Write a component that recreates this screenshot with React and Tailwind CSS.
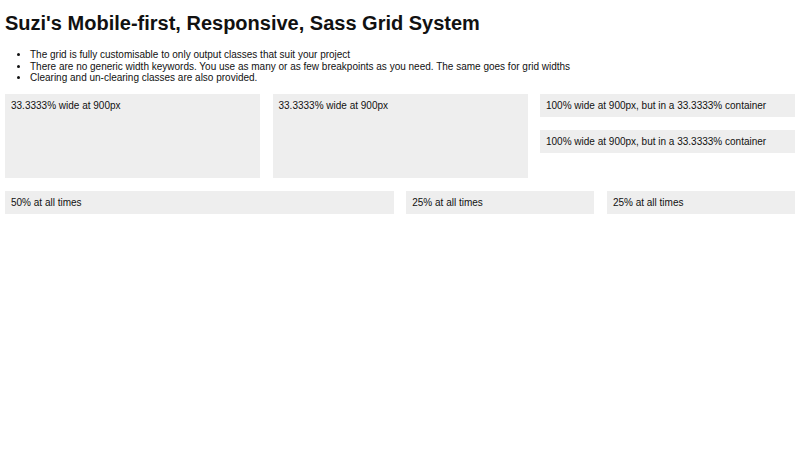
const Box = ({ children, className = "" }) => (
  <div className={`bg-[#eeeeee] px-[6px] py-[5px] text-[10px] leading-[13px] ${className}`}>
    {children}
  </div>
);

const App = () => {
  return (
    <div className="min-h-screen bg-white px-[5px] text-[#111] font-['Liberation_Sans',Arial,sans-serif]">
      <h1 className="pt-[12px] text-[20px] leading-[23px] font-bold">
        Suzi's Mobile-first, Responsive, Sass Grid System
      </h1>

      <ul className="mt-[14px] list-disc pl-[25px] text-[10px] leading-[11.5px]">
        <li>The grid is fully customisable to only output classes that suit your project</li>
        <li>There are no generic width keywords. You use as many or as few breakpoints as you need. The same goes for grid widths</li>
        <li>Clearing and un-clearing classes are also provided.</li>
      </ul>

      <div className="mt-[10.5px] grid grid-cols-3 gap-x-[12.5px]">
        <Box className="h-[84px]">33.3333% wide at 900px</Box>
        <Box className="h-[84px]">33.3333% wide at 900px</Box>
        <div className="flex flex-col gap-[13px]">
          <Box>100% wide at 900px, but in a 33.3333% container</Box>
          <Box>100% wide at 900px, but in a 33.3333% container</Box>
        </div>
      </div>

      <div className="mt-[13px] grid grid-cols-4 gap-x-[12.5px]">
        <Box className="col-span-2">50% at all times</Box>
        <Box>25% at all times</Box>
        <Box>25% at all times</Box>
      </div>
    </div>
  );
};

export default App;
